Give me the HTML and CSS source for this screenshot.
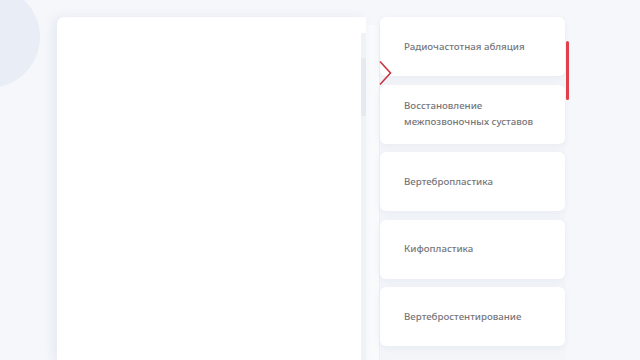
FILE: index.html
```html
<!DOCTYPE html>
<html lang="ru">
<head>
<meta charset="utf-8">
<link rel="stylesheet" href="styles.css">
</head>
<body>
<div class="blob"></div>
<div class="layout">
  <div class="viewer">
    <div class="viewer-body"></div>
    <div class="track"><div class="thumb"></div></div>
  </div>
  <div class="gutter"></div>
  <div class="list">
    <div class="item">Радиочастотная абляция</div>
    <div class="item">Восстановление<br>межпозвоночных суставов</div>
    <div class="item">Вертебропластика</div>
    <div class="item">Кифопластика</div>
    <div class="item">Вертебростентирование</div>
  </div>
  <svg class="arrow" width="14" height="26" viewBox="0 0 14 26"><path d="M1 1.5 L11.5 13 L1 24.5" fill="none" stroke="#c9343f" stroke-width="1.6"/></svg>
  <div class="red-bar"></div>
</div>
</body>
</html>
```
FILE: styles.css
```css
html, body {
  margin: 0;
  padding: 0;
  width: 640px;
  height: 360px;
  overflow: hidden;
  background: #f5f7fb;
  font-family: "Noto Sans", "Open Sans", sans-serif;
  position: relative;
}
.blob {
  position: absolute;
  left: -62px;
  top: -14px;
  width: 102px;
  height: 102px;
  border-radius: 50%;
  background: #e9eef6;
}
.layout {
  position: relative;
  display: flex;
  padding-top: 17px;
  padding-left: 57px;
  height: 343px;
}
.viewer {
  width: 309px;
  background: #ffffff;
  border-radius: 7px 0 0 0;
  box-shadow: -4px 0 10px rgba(200, 208, 222, 0.35);
  display: flex;
  position: relative;
}
.viewer-body {
  flex: 1;
}
.track {
  width: 5px;
  margin-top: 16px;
  background: #f0f2f6;
  position: relative;
}
.thumb {
  margin-top: 25px;
  height: 58px;
  background: #e6eaf0;
}
.gutter {
  width: 13px;
  background: #f9fafc;
  border-right: 1px solid #eceff4;
  margin-top: 8px;
}
.list {
  width: 185px;
  display: flex;
  flex-direction: column;
  gap: 8.5px;
  background: #f3f5f9;
}
.item {
  background: #ffffff;
  border-radius: 6px;
  height: 59px;
  flex: none;
  display: flex;
  align-items: center;
  padding-left: 24px;
  font-size: 9.7px;
  line-height: 16px;
  color: #76767a;
  font-weight: 500;
  box-shadow: 0 2px 6px rgba(215, 222, 234, 0.4);
}
.arrow {
  position: absolute;
  left: 379px;
  top: 60px;
}
.red-bar {
  position: absolute;
  left: 566px;
  top: 41px;
  width: 3px;
  height: 59px;
  border-radius: 2px;
  background: #e0404a;
}
```
